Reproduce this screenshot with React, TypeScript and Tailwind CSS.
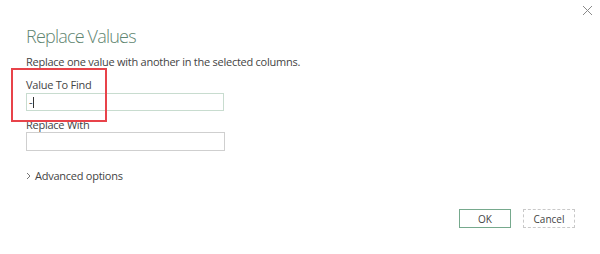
import React from 'react';

export default function App() {
  return (
    <div
      className="relative w-[600px] h-[254px] bg-white overflow-hidden text-[#3b3b3b]"
      style={{ fontFamily: '"Open Sans", "Noto Sans", sans-serif' }}
    >
      {/* close button */}
      <button className="absolute right-[7px] top-[4px] w-[12px] h-[12px] flex items-center justify-center text-[#8a8a8a]">
        <svg width="11" height="11" viewBox="0 0 11 11" fill="none" stroke="currentColor" strokeWidth="1">
          <path d="M1 1 L10 10 M10 1 L1 10" />
        </svg>
      </button>

      <div className="flex flex-col pl-[26px] pt-[24px] pr-[25px]">
        <h1 className="text-[18px] leading-[24px] font-light text-[#5f8571] tracking-[-0.8px]">Replace Values</h1>
        <p className="mt-[6px] text-[11px] leading-[15px] text-[#444] tracking-[-0.25px]">
          Replace one value with another in the selected columns.
        </p>

        <div className="relative mt-[8px] flex flex-col">
          {/* red highlight box */}
          <div className="absolute left-[-15px] top-[-9px] w-[96px] h-[54px] border-2 border-[#e8434a] pointer-events-none" />
          <label className="text-[11px] leading-[15px] text-[#444] tracking-[-0.25px]">Value To Find</label>
          <div className="mt-[1px] w-[198px] h-[18px] border border-[#c8dccf] flex items-center px-[2px] text-[11px] text-[#333]">
            <span>-</span>
            <span className="w-px h-[11px] bg-[#333]" />
          </div>
        </div>

        <label className="mt-[6px] text-[11px] leading-[15px] text-[#444] tracking-[-0.25px]">Replace With</label>
        <div className="w-[199px] h-[19px] border border-[#cfcfcf]" />

        <div className="mt-[17px] flex items-center gap-[4px] text-[11px] leading-[15px] text-[#444] tracking-[-0.25px]">
          <svg width="5" height="8" viewBox="0 0 5 8" fill="none" stroke="#777" strokeWidth="1">
            <path d="M1 1 L4 4 L1 7" />
          </svg>
          <span>Advanced options</span>
        </div>

        <div className="mt-[26px] flex justify-end gap-[12px] pr-0">
          <button className="w-[52px] h-[19px] border border-[#76a98d] text-[10px] text-[#444] leading-none">OK</button>
          <button className="w-[52px] h-[19px] border border-dashed border-[#c9c9c9] text-[10px] text-[#444] leading-none">Cancel</button>
        </div>
      </div>
    </div>
  );
}
